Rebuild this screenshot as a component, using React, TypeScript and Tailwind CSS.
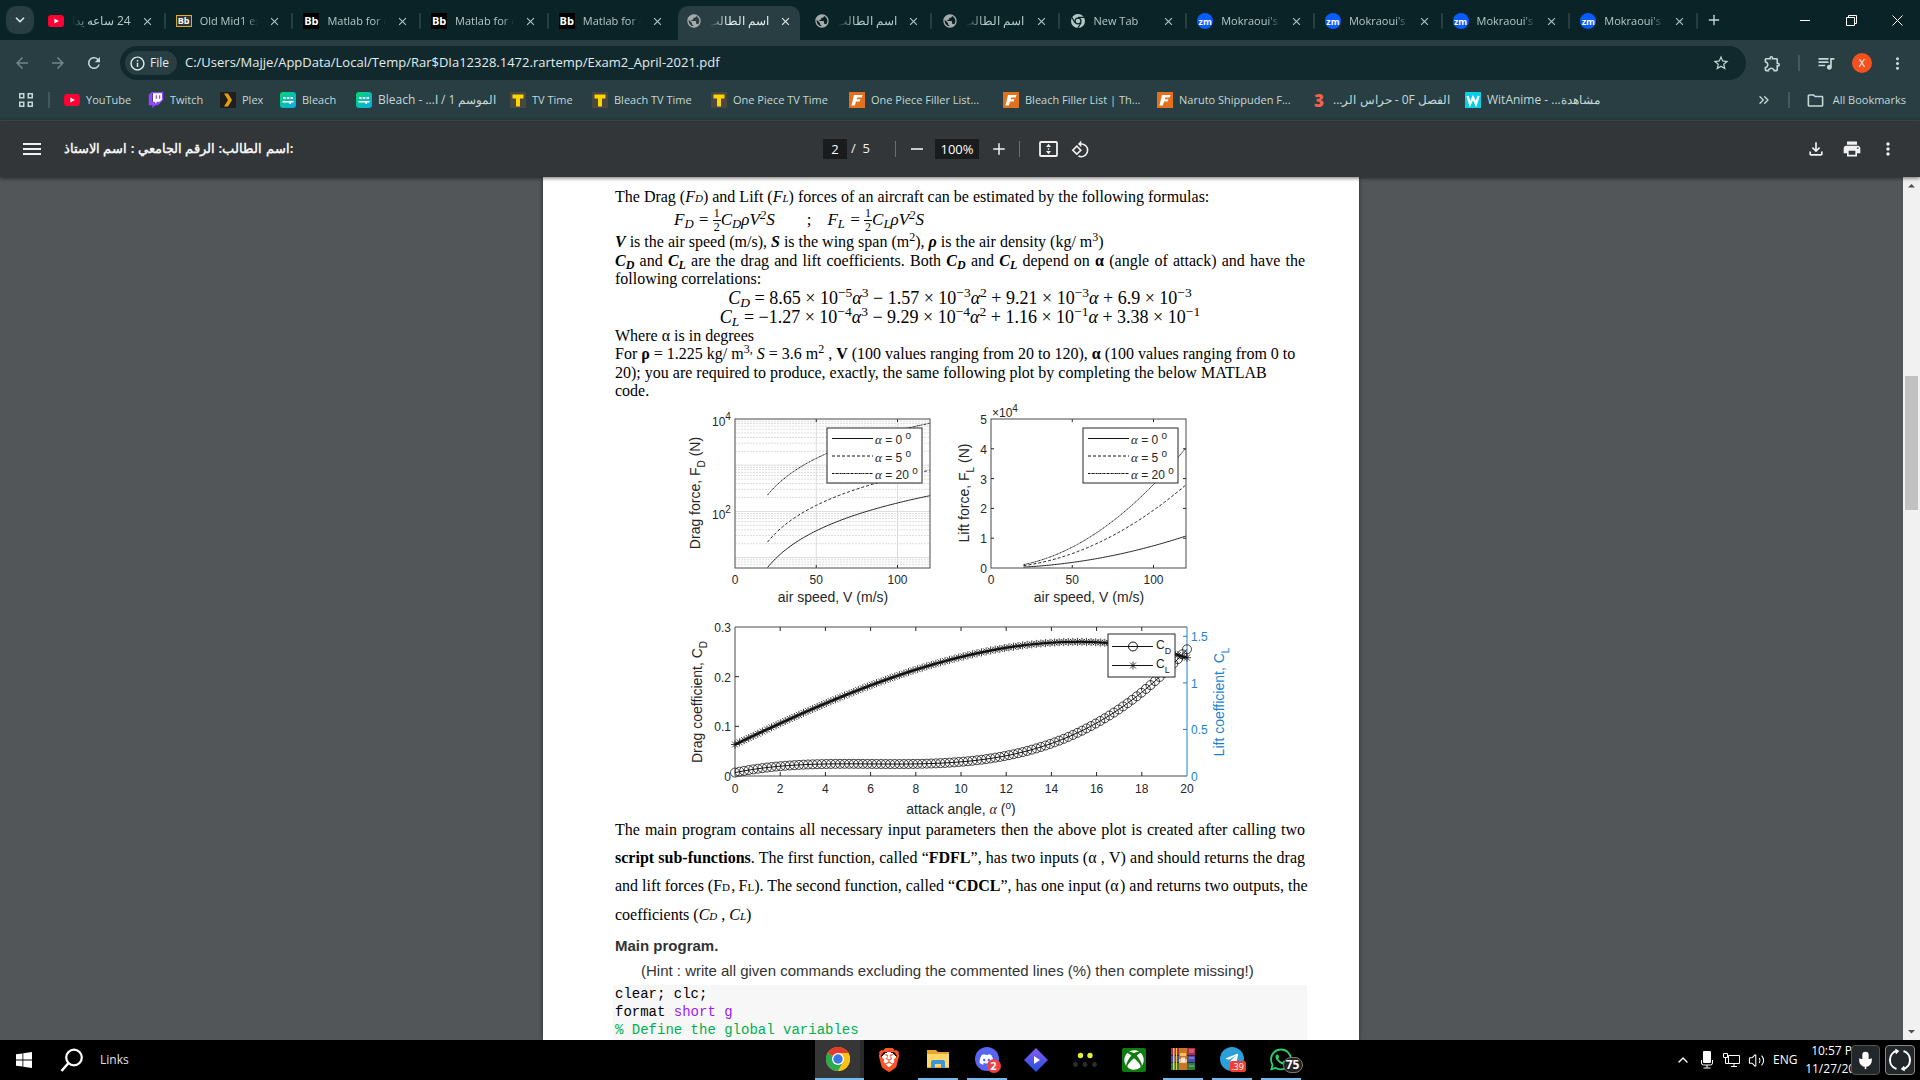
import type { ReactNode } from "react";
import {
  FaDiscord,
  FaTelegramPlane,
  FaTwitch,
  FaWhatsapp,
  FaXbox,
} from "react-icons/fa";
import {
  MdArrowBack,
  MdArrowForward,
  MdClose,
  MdInfoOutline,
  MdMenu,
  MdMoreVert,
  MdOutlineExtension,
  MdOutlineFileDownload,
  MdOutlineFolder,
  MdPrint,
  MdPublic,
  MdQueueMusic,
  MdRefresh,
  MdRotate90DegreesCcw,
  MdStarBorder,
} from "react-icons/md";
import { SiBrave } from "react-icons/si";
import { ChevronDown, ChevronUp, ChevronsRight, Mic, Plus, Volume2 } from "lucide-react";

/* ---------- favicons ---------- */

const YouTubeIcon = () => (
  <svg width="16" height="16" viewBox="0 0 16 16">
    <rect y="2" width="16" height="12" rx="3" fill="#ff0033" />
    <path d="M6.4 5.4 10.8 8l-4.4 2.6z" fill="#fff" />
  </svg>
);

const BbIcon = ({ gold = false }: { gold?: boolean }) => (
  <span
    className={
      gold
        ? "flex h-3 w-4 items-center justify-center border border-[#e0a92c] bg-[#333] text-[9px] font-bold text-white"
        : "flex h-4 w-4 items-center justify-center bg-black text-[11px] font-bold text-white"
    }
  >
    Bb
  </span>
);

const ChromeGray = () => (
  <svg width="16" height="16" viewBox="0 0 16 16">
    <circle cx="8" cy="8" r="7" fill="#b4c8c8" />
    <circle cx="8" cy="8" r="3.6" fill="#0a2326" />
    <circle cx="8" cy="8" r="2.3" fill="#b4c8c8" />
    <path d="M8 4.4h6.4M4.9 9.8 1.8 4.3M11.1 9.8 7.9 15" stroke="#0a2326" strokeWidth="1.2" />
  </svg>
);

const ZmIcon = () => (
  <span className="flex h-4 w-4 items-center justify-center rounded-full bg-[#0b5cff] text-[9px] leading-none font-bold text-white">
    zm
  </span>
);

const TwitchIcon = () => (
  <svg width="16" height="16" viewBox="0 0 16 16">
    <path d="M5 1h9.5v7l-4 4H5z" fill="#fff" />
    <FaTwitch size={16} color="#9146ff" />
  </svg>
);

const PlexIcon = () => (
  <svg width="16" height="16" viewBox="0 0 16 16">
    <rect width="16" height="16" fill="#1f1f1f" />
    <path d="M4 1.500h4L12 8l-4 6.500H4L8 8z" fill="#e5a00d" />
  </svg>
);

const BleachIcon = () => (
  <svg width="16" height="16" viewBox="0 0 16 16">
    <defs>
      <linearGradient id="bleach" x1="0" y1="0" x2="1" y2="1">
        <stop offset="0" stopColor="#06d66f" />
        <stop offset="1" stopColor="#0aa9f0" />
      </linearGradient>
    </defs>
    <rect width="16" height="16" rx="3" fill="url(#bleach)" />
    <path d="M3 5h2.500v2H3zM6.800 5h2.500v2H6.800zM10.500 5H13v2h-2.500zM2.500 9h11v1.500H11V12H9.500v-1.500h-7z" fill="#fff" />
  </svg>
);

const TvIcon = () => (
  <svg width="16" height="16" viewBox="0 0 16 16">
    <rect width="16" height="16" fill="#4a4640" />
    <path d="M2.500 2.500h11v4h-3.500v8H6v-8H2.500z" fill="#ffd500" />
  </svg>
);

const FillerIcon = () => (
  <svg width="16" height="16" viewBox="0 0 16 16">
    <rect width="16" height="16" fill="#e2711d" />
    <path d="M5 3h8.500l-.8 2.600H8.200l-.5 1.600h3.800l-.8 2.400H7L5.800 13.500H2.500z" fill="#fff" />
  </svg>
);

const WitIcon = () => (
  <svg width="16" height="16" viewBox="0 0 16 16">
    <rect width="16" height="16" fill="#08cfe4" />
    <path d="M2.500 4 5 12l3-6.500L11 12l2.500-8" stroke="#fff" strokeWidth="2.400" fill="none" />
  </svg>
);

const ThreeIcon = () => (
  <span className="flex h-4 w-4 items-center justify-center text-[17px] leading-none font-black text-[#f4604a]">3</span>
);

/* ---------- tab strip ---------- */

type TabItem = { icon: ReactNode; title: string; rtl?: boolean; active?: boolean };

const tabs: TabItem[] = [
  { icon: <YouTubeIcon />, title: "24 ساعه يداوم", rtl: true },
  { icon: <BbIcon gold />, title: "Old Mid1 exam" },
  { icon: <BbIcon />, title: "Matlab for engineers" },
  { icon: <BbIcon />, title: "Matlab for engineers" },
  { icon: <BbIcon />, title: "Matlab for engineers" },
  { icon: <MdPublic size={16} color="#a8aaae" />, title: "اسم الطالب: الرقم", rtl: true, active: true },
  { icon: <MdPublic size={16} color="#a8aaae" />, title: "اسم الطالب: الرقم", rtl: true },
  { icon: <MdPublic size={16} color="#a8aaae" />, title: "اسم الطالب: الرقم", rtl: true },
  { icon: <ChromeGray />, title: "New Tab" },
  { icon: <ZmIcon />, title: "Mokraoui's Zoom" },
  { icon: <ZmIcon />, title: "Mokraoui's Zoom" },
  { icon: <ZmIcon />, title: "Mokraoui's Zoom" },
  { icon: <ZmIcon />, title: "Mokraoui's Zoom" },
];

const Tab = ({ tab, line }: { tab: TabItem; line: boolean }) => (
  <div className="flex h-[34px] min-w-0 flex-1 items-center">
    <div
      className={
        tab.active
          ? "flex h-full min-w-0 flex-1 items-center rounded-t-[10px] bg-[#283e42] pr-2 pb-1 pl-2 text-[#e3eded]"
          : "flex h-full min-w-0 flex-1 items-center pr-2 pb-1 pl-2 text-[#b4c8c8]"
      }
    >
      <span className="w-4 shrink-0">{tab.icon}</span>
      <span
        dir={tab.rtl ? "rtl" : "ltr"}
        className={
          tab.rtl
            ? "ml-2 min-w-0 flex-1 overflow-hidden text-[12px] whitespace-nowrap [mask-image:linear-gradient(to_left,black_70%,transparent)]"
            : "ml-2 min-w-0 flex-1 overflow-hidden text-[11px] whitespace-nowrap [mask-image:linear-gradient(to_right,black_80%,transparent)]"
        }
      >
        {tab.title}
      </span>
      <button aria-label="Close tab" className="ml-2.5 shrink-0">
        <MdClose size={13} />
      </button>
    </div>
    <span className={line ? "mx-[2px] mb-1 h-4 w-[2px] rounded bg-[#283e42]" : "w-[6px]"} />
  </div>
);

const TabStrip = () => (
  <div className="flex h-10 shrink-0 items-end bg-[#0a2326]">
    <button
      aria-label="Search tabs"
      className="mr-1.5 mb-1.5 ml-1.5 flex h-7 w-7 items-center justify-center rounded-[10px] bg-[#283e42] text-[#d3e3e3]"
    >
      <ChevronDown size={14} strokeWidth={3} />
    </button>
    <div className="flex max-w-[1660px] min-w-0 flex-1">
      {tabs.map((tab, i) => (
        <Tab key={i} tab={tab} line={!tab.active && i !== 4} />
      ))}
    </div>
    <button aria-label="New tab" className="mb-3 ml-1.5 text-[#c5d8d8]">
      <Plus size={16} />
    </button>
    <div className="ml-auto flex h-10 items-center text-white">
      <button aria-label="Minimize" className="flex w-[46px] justify-center">
        <span className="h-px w-2.5 bg-white" />
      </button>
      <button aria-label="Restore" className="flex w-[46px] justify-center">
        <svg width="11" height="11" viewBox="0 0 11 11" fill="none" stroke="currentColor">
          <path d="M.5 2.500h8v8h-8zM2.500 2.500v-2h8v8h-2" />
        </svg>
      </button>
      <button aria-label="Close" className="flex w-[46px] justify-center">
        <svg width="11" height="11" viewBox="0 0 11 11" stroke="currentColor">
          <path d="M.5.5l10 10M10.500.5l-10 10" />
        </svg>
      </button>
    </div>
  </div>
);

/* ---------- address bar ---------- */

const AddressBar = () => (
  <div className="flex h-[42px] shrink-0 items-center bg-[#283e42] pt-1 text-[#c5d8d8]">
    <div className="flex w-[120px] shrink-0 items-center gap-[18px] pl-[13px]">
      <button aria-label="Back" className="text-[#71878a]">
        <MdArrowBack size={18} />
      </button>
      <button aria-label="Forward" className="text-[#71878a]">
        <MdArrowForward size={18} />
      </button>
      <button aria-label="Reload">
        <MdRefresh size={18} />
      </button>
    </div>
    <div className="flex h-[34px] min-w-0 flex-1 items-center rounded-full bg-[#11292d] pr-4 pl-[5px]">
      <button className="flex h-6 items-center gap-1 rounded-full bg-[#283e42] pr-2 pl-1 text-[12px] font-medium text-[#e3eded]">
        <MdInfoOutline size={17} />
        File
      </button>
      <input
        aria-label="Address"
        className="ml-2 min-w-0 flex-1 bg-transparent text-[13px] text-[#e3eded] outline-none"
        defaultValue="C:/Users/Majje/AppData/Local/Temp/Rar$DIa12328.1472.rartemp/Exam2_April-2021.pdf"
      />
      <button aria-label="Bookmark this page">
        <MdStarBorder size={18} />
      </button>
    </div>
    <div className="flex w-[174px] shrink-0 items-center pl-[17px]">
      <button aria-label="Extensions">
        <MdOutlineExtension size={19} />
      </button>
      <span className="ml-4 h-4 w-[2px] bg-[#46595c]" />
      <button aria-label="Media" className="ml-4">
        <MdQueueMusic size={20} />
      </button>
      <button
        aria-label="Profile"
        className="ml-4 flex h-5 w-5 items-center justify-center rounded-full bg-[#f4511e] text-[11px] text-white"
      >
        X
      </button>
      <button aria-label="Menu" className="ml-4">
        <MdMoreVert size={19} />
      </button>
    </div>
  </div>
);

/* ---------- bookmarks ---------- */

const bookmarks = [
  { icon: <YouTubeIcon />, label: "YouTube", style: "w-[84px]" },
  { icon: <TwitchIcon />, label: "Twitch", style: "w-[72px]" },
  { icon: <PlexIcon />, label: "Plex", style: "w-[60px]" },
  { icon: <BleachIcon />, label: "Bleach", style: "w-[76px]" },
  { icon: <BleachIcon />, label: "Bleach - الموسم 1 / ا...\u200f", style: "w-[154px] text-[12px]" },
  { icon: <TvIcon />, label: "TV Time", style: "w-[82px]" },
  { icon: <TvIcon />, label: "Bleach TV Time", style: "w-[119px]" },
  { icon: <TvIcon />, label: "One Piece TV Time", style: "w-[138px]" },
  { icon: <FillerIcon />, label: "One Piece Filler List...", style: "w-[154px]" },
  { icon: <FillerIcon />, label: "Bleach Filler List | Th...", style: "w-[154px]" },
  { icon: <FillerIcon />, label: "Naruto Shippuden F...", style: "w-[154px]" },
  { icon: <ThreeIcon />, label: "الفصل 0F - حراس الر...", style: "w-[154px] text-[12px]", rtl: true },
  { icon: <WitIcon />, label: "WitAnime - مشاهدة...\u200f", style: "w-[154px] text-[12px]" },
];

const BookmarksBar = () => (
  <nav className="flex h-[39px] shrink-0 items-center border-b border-[#474b4e] bg-[#283e42] pb-0.5 text-[11px] text-[#c5d8d8]">
    <button aria-label="Apps" className="ml-[19px]">
      <svg width="14" height="14" viewBox="0 0 14 14" fill="none" stroke="currentColor" strokeWidth="1.500">
        <path d="M.75.75h4v4h-4zM9.250.75h4v4h-4zM.75 9.250h4v4h-4zM9.250 9.250h4v4h-4z" />
      </svg>
    </button>
    <span className="mr-[14px] ml-[15px] h-4 w-[2px] bg-[#46595c]" />
    <div className="flex min-w-0 flex-1 overflow-hidden">
      {bookmarks.map((b, i) => (
        <a key={i} href="#" className={`flex shrink-0 items-center gap-1.5 whitespace-nowrap ${b.style}`}>
          <span className="w-4 shrink-0">{b.icon}</span>
          <span dir={b.rtl ? "rtl" : "ltr"}>{b.label}</span>
        </a>
      ))}
    </div>
    <button aria-label="More bookmarks" className="mr-4">
      <ChevronsRight size={16} />
    </button>
    <span className="h-4 w-[2px] bg-[#46595c]" />
    <a href="#" className="mr-3.5 ml-4 flex items-center gap-2 whitespace-nowrap">
      <MdOutlineFolder size={19} />
      All Bookmarks
    </a>
  </nav>
);

/* ---------- pdf toolbar ---------- */

const PdfToolbar = () => (
  <div className="z-10 flex h-14 shrink-0 items-center bg-[#323639] text-[#f1f1f1] shadow-[0_1px_4px_rgba(0,0,0,0.6)]">
    <div className="flex flex-1 items-center pl-5">
      <button aria-label="Menu">
        <MdMenu size={24} />
      </button>
      <h1 className="ml-5 text-[13px] font-bold whitespace-nowrap">اسم الطالب: الرقم الجامعي : اسم الاستاذ:</h1>
    </div>
    <div className="flex w-[272px] shrink-0 items-center text-[13px]">
      <input
        aria-label="Page number"
        className="h-5 w-6 bg-[#191b1c] text-center text-white outline-none"
        defaultValue="2"
      />
      <span className="ml-1 w-11 whitespace-pre">/  5</span>
      <span className="h-4 w-px bg-[#6c6f71]" />
      <button aria-label="Zoom out" className="ml-[11px] flex w-5 justify-center">
        <span className="h-[2px] w-3 bg-[#c9cacb]" />
      </button>
      <input
        aria-label="Zoom level"
        className="ml-2 h-5 w-11 bg-[#191b1c] text-center text-white outline-none"
        defaultValue="100%"
      />
      <button aria-label="Zoom in" className="ml-[11px]">
        <Plus size={18} />
      </button>
      <span className="ml-[11px] h-4 w-px bg-[#6c6f71]" />
      <button aria-label="Fit to page" className="ml-[19px]">
        <svg width="19" height="16" viewBox="0 0 19 16">
          <rect x="1" y="1" width="17" height="14" rx="1" fill="none" stroke="currentColor" strokeWidth="1.800" />
          <path d="M9.500 2.800 12 6H7zM9.500 13.200 12 10H7zM8.800 7.300h1.400v1.400H8.800z" fill="currentColor" />
        </svg>
      </button>
      <button aria-label="Rotate" className="ml-[13px]">
        <MdRotate90DegreesCcw size={19} />
      </button>
    </div>
    <div className="flex flex-1 items-center justify-end gap-4 pr-[22px]">
      <button aria-label="Download">
        <MdOutlineFileDownload size={20} />
      </button>
      <button aria-label="Print">
        <MdPrint size={20} />
      </button>
      <button aria-label="More actions">
        <MdMoreVert size={20} />
      </button>
    </div>
  </div>
);

/* ---------- plots ---------- */

const cd = (a: number) => 8.65e-5 * a ** 3 - 1.57e-3 * a ** 2 + 9.21e-3 * a + 6.9e-3;
const cl = (a: number) => -1.27e-4 * a ** 3 - 9.29e-4 * a ** 2 + 1.16e-1 * a + 3.38e-1;
const linspace = (from: number, to: number) =>
  Array.from({ length: 100 }, (_, i) => from + ((to - from) * i) / 99);

const speeds = linspace(20, 120);
const angles = linspace(0, 20);
const force = (c: number, v: number) => 0.5 * 1.225 * 3.6 * v * v * c;

const dashes = [
  { alpha: 0, dash: undefined },
  { alpha: 5, dash: "3 2" },
  { alpha: 20, dash: "2 .5 .8 .5" },
];

const path = (points: number[][]) => "M" + points.map((p) => p.join(" ")).join("L");

const TOP = 418;
const BOTTOM = 567;
const speedX = (left: number, v: number) => left + (v * 195) / 120;
const dragY = (f: number) => TOP + (4 - Math.log10(f)) * 46.2;
const liftY = (f: number) => BOTTOM - (f / 50000) * (BOTTOM - TOP);

const minorGrid: number[] = [];
for (let d = 0; d < 4; d++) {
  for (let k = 2; k < 10; k++) {
    const f = k * 10 ** d;
    if (f > 6.1) minorGrid.push(f);
  }
}

const Legend = ({ left }: { left: number }) => (
  <g>
    <rect x={left} y={427} width="95" height="55" fill="#fff" stroke="#262626" />
    {dashes.map((d, i) => (
      <g key={d.alpha}>
        <path d={`M${left + 5} ${437.5 + i * 17.5}h41`} stroke="#111" strokeDasharray={d.dash} />
        <text x={left + 48} y={443 + i * 17.5} fontSize="12">
          <tspan fontFamily="Liberation Serif" fontStyle="italic" fontSize="13">α</tspan>
          {` = ${d.alpha} `}
          <tspan dy="-5" fontSize="10">o</tspan>
        </text>
      </g>
    ))}
  </g>
);

const SpeedAxis = ({ left }: { left: number }) => (
  <g>
    <path
      d={[50, 100].map((v) => `M${speedX(left, v)} ${BOTTOM}v-3M${speedX(left, v)} ${TOP}v3`).join("")}
      stroke="#262626"
    />
    <rect x={left} y={TOP} width="195" height={BOTTOM - TOP} fill="none" stroke="#4a4a4a" />
    {[0, 50, 100].map((v) => (
      <text key={v} x={speedX(left, v)} y="583" textAnchor="middle">
        {v}
      </text>
    ))}
    <text x={left + 98} y="601" textAnchor="middle" fontSize="14">
      air speed, V (m/s)
    </text>
  </g>
);

const ForcePlot = ({
  left,
  coef,
  toY,
}: {
  left: number;
  coef: (a: number) => number;
  toY: (f: number) => number;
}) => (
  <g>
    {dashes.map((d) => (
      <path
        key={d.alpha}
        d={path(speeds.map((v) => [speedX(left, v), toY(force(coef(d.alpha), v))]))}
        fill="none"
        stroke="#222"
        strokeDasharray={d.dash}
      />
    ))}
    <SpeedAxis left={left} />
    <Legend left={left + 92} />
  </g>
);

const angleX = (a: number) => 735 + (a * 452) / 20;
const cdY = (c: number) => 775 - (c * 149) / 0.3;
const clY = (c: number) => 775 - (c * 149) / 1.6;

const Star = ({ x, y }: { x: number; y: number }) => (
  <path d={`M${x - 4} ${y}h8M${x} ${y - 4}v8M${x - 3} ${y - 3}l6 6M${x - 3} ${y + 3}l6 -6`} stroke="#111" strokeWidth=".8" />
);

const Plots = () => (
  <svg
    className="ml-[65px] block"
    width="560"
    height="415"
    viewBox="680 400 560 415"
    fontFamily="Liberation Sans, sans-serif"
    fontSize="12"
    fill="#262626"
  >
    {/* drag force, log scale */}
    <path
      d={minorGrid.map((f) => `M735 ${dragY(f)}h195`).join("")}
      stroke="#d4d4d4"
      strokeDasharray="2 1"
      strokeWidth=".8"
    />
    <path
      d={[10, 100, 1000].map((f) => `M735 ${dragY(f)}h195`).join("") + `M${speedX(735, 50)} 418v149M${speedX(735, 100)} 418v149`}
      stroke="#dcdcdc"
    />
    <ForcePlot left={735} coef={cd} toY={dragY} />
    <text x="712" y="425">
      10<tspan dy="-6" fontSize="10">4</tspan>
    </text>
    <text x="712" y="518">
      10<tspan dy="-6" fontSize="10">2</tspan>
    </text>
    <text transform="translate(700 492) rotate(-90)" textAnchor="middle" fontSize="14">
      Drag force, F<tspan dy="5" fontSize="10">D</tspan>
      <tspan dy="-5"> (N)</tspan>
    </text>

    {/* lift force */}
    <ForcePlot left={991} coef={cl} toY={liftY} />
    <path
      d={[1, 2, 3, 4].map((n) => `M991 ${liftY(n * 10000)}h3M1186 ${liftY(n * 10000)}h-3`).join("")}
      stroke="#262626"
    />
    {[0, 1, 2, 3, 4, 5].map((n) => (
      <text key={n} x="987" y={liftY(n * 10000) + 5} textAnchor="end">
        {n}
      </text>
    ))}
    <text x="992" y="416">
      ×10<tspan dy="-5" fontSize="10">4</tspan>
    </text>
    <text transform="translate(969 492) rotate(-90)" textAnchor="middle" fontSize="14">
      Lift force, F<tspan dy="5" fontSize="10">L</tspan>
      <tspan dy="-5"> (N)</tspan>
    </text>

    {/* coefficients against attack angle */}
    <path d="M1187 626H735V775H1187" fill="none" stroke="#4a4a4a" />
    <path
      d={[2, 4, 6, 8, 10, 12, 14, 16, 18].map((a) => `M${angleX(a)} 775v-4M${angleX(a)} 626v4`).join("") + `M735 ${cdY(0.1)}h4M735 ${cdY(0.2)}h4`}
      stroke="#262626"
    />
    <path
      d={`M1187 626V775M1187 ${clY(0.5)}h-4M1187 ${clY(1)}h-4M1187 ${clY(1.5)}h-4`}
      stroke="#1c84cc"
    />
    {[0, 2, 4, 6, 8, 10, 12, 14, 16, 18, 20].map((a) => (
      <text key={a} x={angleX(a)} y="792" textAnchor="middle">
        {a}
      </text>
    ))}
    {[0, 0.1, 0.2, 0.3].map((c) => (
      <text key={c} x="731" y={cdY(c) + 5} textAnchor="end">
        {c}
      </text>
    ))}
    {[0, 0.5, 1, 1.5].map((c) => (
      <text key={c} x="1191" y={clY(c) + 5} fill="#1c84cc">
        {c}
      </text>
    ))}
    <path d={path(angles.map((a) => [angleX(a), cdY(cd(a))]))} fill="none" stroke="#111" />
    <path d={path(angles.map((a) => [angleX(a), clY(cl(a))]))} fill="none" stroke="#111" strokeWidth="2" />
    {angles.map((a) => (
      <g key={a}>
        <circle cx={angleX(a)} cy={cdY(cd(a))} r="4.500" fill="none" stroke="#111" strokeWidth=".8" />
        <Star x={angleX(a)} y={clY(cl(a))} />
      </g>
    ))}
    <rect x="1108" y="633" width="67" height="43" fill="#fff" stroke="#262626" />
    <path d="M1112 645.500h41M1112 664.500h41" stroke="#111" />
    <circle cx="1133" cy="645.500" r="4.500" fill="none" stroke="#111" />
    <Star x={1133} y={664.5} />
    <text x="1156" y="648">
      C<tspan dy="5" fontSize="9">D</tspan>
    </text>
    <text x="1156" y="667">
      C<tspan dy="5" fontSize="9">L</tspan>
    </text>
    <text transform="translate(702 701) rotate(-90)" textAnchor="middle" fontSize="14">
      Drag coefficient, C<tspan dy="5" fontSize="10">D</tspan>
    </text>
    <text transform="translate(1224 701) rotate(-90)" textAnchor="middle" fontSize="14" fill="#1c84cc">
      Lift coefficient, C<tspan dy="5" fontSize="10">L</tspan>
    </text>
    <text x="961" y="813" textAnchor="middle" fontSize="14" className="overflow-visible">
      attack angle, <tspan fontFamily="Liberation Serif" fontStyle="italic">α</tspan> (
      <tspan dy="-5" fontSize="10">o</tspan>
      <tspan dy="5">)</tspan>
    </text>
  </svg>
);

/* ---------- document ---------- */

const Half = () => (
  <span className="inline-flex flex-col items-center text-[12px] leading-[11px] not-italic">
    <span className="border-b border-black px-px pb-px">1</span>
    <span className="pt-px">2</span>
  </span>
);

const Small = ({ children }: { children: string }) => <span className="text-[11px]">{children}</span>;

const Pow = ({ c, e }: { c: string; e: string }) => (
  <>
    {c} × 10<sup>−{e}</sup>
  </>
);

const Alpha = ({ e }: { e?: string }) => (
  <>
    <i>α</i>
    {e && <sup>{e}</sup>}
  </>
);

const PdfPage = () => (
  <article className="w-[816px] shrink-0 bg-white pt-[11px] pr-[54px] pl-[72px] font-['Liberation_Serif',serif] text-[16px] leading-[18px] text-black shadow-[0_0_4px_rgba(0,0,0,0.5)]">
    <p>
      The Drag (<i>F<Small>D</Small></i>) and Lift (<i>F<Small>L</Small></i>) forces of an aircraft can be estimated by
      the following formulas:
    </p>
    <div className="flex h-[26px] items-center pl-[59px] text-[17px] italic">
      <span>F<sub>D</sub> =&thinsp;</span>
      <Half />
      <span>C<sub>D</sub>ρV<sup>2</sup>S</span>
      <span className="mr-4 ml-8 not-italic">;</span>
      <span>F<sub>L</sub> =&thinsp;</span>
      <Half />
      <span>C<sub>L</sub>ρV<sup>2</sup>S</span>
    </div>
    <p className="mb-px">
      <b><i>V</i></b> is the air speed (m/s), <b><i>S</i></b> is the wing span (m<sup>2</sup>), <b><i>ρ</i></b> is the air
      density (kg/ m<sup>3</sup>)
    </p>
    <p className="[text-align-last:justify]">
      <b><i>C<sub>D</sub></i></b> and <b><i>C<sub>L</sub></i></b> are the drag and lift coefficients. Both{" "}
      <b><i>C<sub>D</sub></i></b> and <b><i>C<sub>L</sub></i></b> depend on <b>α</b> (angle of attack) and have the
    </p>
    <p>following correlations:</p>
    <div className="pt-px text-center text-[18px] leading-[19px]">
      <p>
        <i>C<sub>D</sub></i> = <Pow c="8.65" e="5" /><Alpha e="3" /> − <Pow c="1.57" e="3" /><Alpha e="2" /> +{" "}
        <Pow c="9.21" e="3" /><Alpha /> + <Pow c="6.9" e="3" />
      </p>
      <p>
        <i>C<sub>L</sub></i> = −<Pow c="1.27" e="4" /><Alpha e="3" /> − <Pow c="9.29" e="4" /><Alpha e="2" /> +{" "}
        <Pow c="1.16" e="1" /><Alpha /> + <Pow c="3.38" e="1" />
      </p>
    </div>
    <p>Where α is in degrees</p>
    <p>
      For <b>ρ</b> = 1.225 kg/ m<sup>3,</sup> <i>S</i> = 3.6 m<sup>2</sup> , <b>V</b> (100 values ranging from 20 to 120),{" "}
      <b>α</b> (100 values ranging from 0 to
    </p>
    <p className="leading-[19px]">
      20); you are required to produce, exactly, the same following plot by completing the below MATLAB
    </p>
    <p className="mb-px">code.</p>
    <Plots />
    <div className="leading-7 whitespace-nowrap">
      <p className="[text-align-last:justify]">
        The main program contains all necessary input parameters then the above plot is created after calling two
      </p>
      <p className="[text-align-last:justify]">
        <b>script sub-functions</b>. The first function, called “<b>FDFL</b>”, has two inputs (α , V) and should returns
        the drag
      </p>
      <p className="[text-align-last:justify]">
        and lift forces (F<Small>D</Small>&#8202;,&thinsp;F<Small>L</Small>). The second function, called “<b>CDCL</b>”,
        has one input (α&#8202;) and returns two outputs, the
      </p>
      <p>
        coefficients (<i>C<Small>D</Small></i> , <i>C<Small>L</Small></i>)
      </p>
    </div>
    <h2 className="mt-[7px] font-['Liberation_Sans',sans-serif] text-[15px] font-bold text-[#333]">Main program.</h2>
    <p className="mt-[7px] pl-[26px] font-['Liberation_Sans',sans-serif] text-[15px] whitespace-nowrap text-[#333]">
      (Hint : write all given commands excluding the commented lines (%) then complete missing!)
    </p>
    <pre className="-mx-0.5 mt-[5px] bg-[#f7f7f7] px-0.5 pb-10 font-['Liberation_Mono',monospace] text-[14px] leading-[18px]">
      {"clear; clc;\nformat "}
      <span className="text-[#a020f0]">short g</span>
      {"\n"}
      <span className="text-[#00b050]">% Define the global variables</span>
    </pre>
  </article>
);

const Scrollbar = () => (
  <div className="flex w-[17px] shrink-0 flex-col items-center bg-[#f1f1f1]">
    <svg width="17" height="17" viewBox="0 0 17 17" fill="#505050">
      <path d="M5 10.500 8.500 7l3.500 3.500z" />
    </svg>
    <div className="mt-[182px] h-[134px] w-[13px] bg-[#c1c1c1]" />
    <svg className="mt-auto" width="17" height="17" viewBox="0 0 17 17" fill="#505050">
      <path d="M5 7l3.500 3.500L12 7z" />
    </svg>
  </div>
);

/* ---------- taskbar ---------- */

const ChromeIcon = () => (
  <svg width="24" height="24" viewBox="0 0 24 24">
    <circle cx="12" cy="12" r="12" fill="#fbc116" />
    <path d="M12 12 1.600 6A12 12 0 0 1 22.400 6z" fill="#e33b2e" />
    <path d="M12 12 1.600 6A12 12 0 0 0 12 24l5.200-9z" fill="#2da94f" />
    <path d="M12 6h10.400A12 12 0 0 1 12 24l5.200-9z" fill="#fbc116" />
    <circle cx="12" cy="12" r="6" fill="#fff" />
    <circle cx="12" cy="12" r="4.700" fill="#3b78e7" />
  </svg>
);

const BraveIcon = () => (
  <span className="flex h-6 w-6 items-center justify-center">
    <SiBrave size={24} color="#fb542b" className="[background:radial-gradient(#fff_45%,transparent_46%)]" />
  </span>
);

const FolderIcon = () => (
  <svg width="24" height="24" viewBox="0 0 24 24">
    <path d="M1 3h9l2 2h11v16H1z" fill="#e9a52b" />
    <path d="M1 7h22v13H1z" fill="#ffd869" />
    <path d="M5 21v-6a2 2 0 0 1 2-2h10a2 2 0 0 1 2 2v6h-4v-4H9v4z" fill="#3f96d6" />
  </svg>
);

const DiscordIcon = () => (
  <span className="relative flex h-6 w-6 items-center justify-center rounded-full bg-[#5865f2] text-white">
    <FaDiscord size={15} />
    <span className="absolute top-3 left-3 flex h-3.5 w-3.5 items-center justify-center rounded-full bg-[#ed4245] text-[11px] font-bold">
      2
    </span>
  </span>
);

const PlayIcon = () => (
  <svg width="24" height="24" viewBox="0 0 24 24">
    <defs>
      <linearGradient id="diamond" x1="0" y1="0" x2="0" y2="1">
        <stop offset="0" stopColor="#8a5cf0" />
        <stop offset="1" stopColor="#1d4fe0" />
      </linearGradient>
    </defs>
    <path d="M12 0l12 12-12 12L0 12z" fill="url(#diamond)" />
    <path d="M10 8l6 4-6 4z" fill="#fff" />
  </svg>
);

const DotsIcon = () => (
  <svg width="24" height="24" viewBox="0 0 24 24">
    <circle cx="7.500" cy="7.500" r="2.700" fill="#e0ee3c" />
    <circle cx="17" cy="7.500" r="2.700" fill="#e0ee3c" />
    <circle cx="2.500" cy="16.500" r="2.400" fill="#2d2d2d" />
    <circle cx="12" cy="16.500" r="2.400" fill="#2d2d2d" />
    <circle cx="21.500" cy="16.500" r="2.400" fill="#2d2d2d" />
  </svg>
);

const XboxIcon = () => (
  <span className="flex h-6 w-6 items-center justify-center rounded-xs bg-[#107c10] text-white">
    <FaXbox size={20} />
  </span>
);

const RarIcon = () => (
  <svg width="24" height="24" viewBox="0 0 24 24">
    <path d="M0 1h24v7H0z" fill="#b52a4a" />
    <path d="M0 8.500h24v7H0z" fill="#4a4fb0" />
    <path d="M0 16h24v7H0z" fill="#2f7d3a" />
    <path d="M2 1h1.500v22H2zM5 1h1v22H5z" fill="#e8c84a" />
    <path d="M8 1h8v22H8z" fill="#c9762b" />
    <path d="M9 6h6v3H9zM8 12h8v4H8z" fill="#f0c35a" />
    <path d="M10 10.500h4v5h-4z" fill="#e8e8e8" />
    <path d="M18 3h5M18 5h5M18 11h5M18 19h5" stroke="#e6e6e6" strokeWidth=".6" />
  </svg>
);

const TelegramIcon = () => (
  <span className="relative flex h-6 w-6 items-center justify-center rounded-full bg-[#2a9fd8] text-white">
    <FaTelegramPlane size={14} />
    <span className="absolute top-3.5 left-2.5 flex h-[11px] w-4 items-center justify-center rounded-xs bg-[#f23c34] text-[9px]">
      .39
    </span>
  </span>
);

const WhatsappIcon = () => (
  <span className="relative flex h-6 w-6 text-[#25d366]">
    <FaWhatsapp size={25} />
    <span className="absolute top-2.5 left-3.5 flex h-4 w-5 items-center justify-center rounded-full border border-[#777] bg-[#222] text-[12px] font-bold text-white">
      75
    </span>
  </span>
);

const apps = [
  { name: "Chrome", icon: <ChromeIcon />, open: true, active: true },
  { name: "Brave", icon: <BraveIcon /> },
  { name: "Explorer", icon: <FolderIcon />, open: true },
  { name: "Discord", icon: <DiscordIcon />, open: true },
  { name: "Player", icon: <PlayIcon /> },
  { name: "Dots", icon: <DotsIcon /> },
  { name: "Xbox", icon: <XboxIcon /> },
  { name: "WinRAR", icon: <RarIcon />, open: true },
  { name: "Telegram", icon: <TelegramIcon />, open: true },
  { name: "WhatsApp", icon: <WhatsappIcon />, open: true },
];

const Taskbar = () => (
  <footer className="flex h-10 shrink-0 items-stretch bg-black text-white">
    <div className="flex flex-1 items-center pl-4">
      <button aria-label="Start">
        <svg width="16" height="16" viewBox="0 0 16 16" fill="#fff">
          <path d="M0 2.300 6.500 1.400v6.200H0zM7.300 1.300 16 0v7.600H7.300zM0 8.400h6.500v6.200L0 13.700zM7.300 8.400H16V16l-8.700-1.300z" />
        </svg>
      </button>
      <button aria-label="Search" className="ml-7">
        <svg width="24" height="24" viewBox="0 0 24 24" fill="none" stroke="#fff" strokeWidth="2.200">
          <circle cx="14" cy="9.500" r="7.800" />
          <path d="M8.500 15 1.500 23" strokeWidth="2.600" />
        </svg>
      </button>
      <span className="ml-4 text-[12px] text-[#e0e0e0]">Links</span>
    </div>
    <div className="flex shrink-0">
      {apps.map((app) => (
        <button
          key={app.name}
          aria-label={app.name}
          className={
            app.active
              ? "flex w-[49px] flex-col items-center border-r-4 border-[#2a2a2a] bg-[#363636]"
              : "flex w-[49px] flex-col items-center"
          }
        >
          <span className="flex flex-1 items-center">{app.icon}</span>
          {app.open && (
            <span className={app.active ? "-mr-1 h-0.5 w-[49px] bg-[#76b9ed]" : "h-0.5 w-10 bg-[#76b9ed]"} />
          )}
        </button>
      ))}
    </div>
    <div className="flex w-[615px] shrink-0 items-center justify-end overflow-hidden pr-[5px]">
      <ChevronUp size={16} />
      <svg className="ml-2" width="16" height="18" viewBox="0 0 16 18" fill="#fff">
        <rect x="4" y="0" width="8" height="12" rx="1" />
        <path d="M2.500 9v3q0 2 2 2h7q2 0 2-2V9M8 14v3M4.500 17h7" fill="none" stroke="#fff" />
      </svg>
      <svg className="ml-2" width="17" height="15" viewBox="0 0 17 15" fill="none" stroke="#fff">
        <path d="M5.500 2.500h11v8h-11zM11 10.500v3M8 13.500h6M.5.500h4v4h-4zM2.500 4.500v6h3" />
      </svg>
      <Volume2 className="ml-2" size={17} strokeWidth={1.5} />
      <span className="ml-2 w-[30px] text-[12px]">ENG</span>
      <div className="relative flex h-10 w-[112px] items-center">
        <div className="w-[68px] text-center text-[12px] leading-[18px] whitespace-nowrap">
          <p>10:57 PM</p>
          <p>11/27/2024</p>
        </div>
        <button
          aria-label="Voice input"
          className="absolute top-[5px] left-12 flex h-[30px] w-[29px] items-center justify-center rounded-sm border border-[#55534a] bg-[#22272b]"
        >
          <Mic size={19} fill="#fff" />
        </button>
        <button
          aria-label="Sync"
          className="absolute top-[5px] left-[82px] flex h-[30px] w-[30px] items-center justify-center rounded-sm border border-[#8a887c] bg-[#22272b]"
        >
          <svg width="24" height="24" viewBox="0 0 24 24" fill="none" stroke="#fff" strokeWidth="2">
            <path d="M9 2.800A9.500 9.500 0 0 0 8.500 21M15 21.200A9.500 9.500 0 0 0 15.500 3" />
            <path d="M7.500 1l3.500 2-3 3zM16.500 23 13 21l3-3z" fill="#fff" strokeWidth=".5" />
          </svg>
        </button>
      </div>
    </div>
  </footer>
);

export default function App() {
  return (
    <div className="flex h-screen flex-col overflow-hidden bg-[#525659] font-['Open_Sans','Noto_Sans',sans-serif] text-[12px]">
      <TabStrip />
      <AddressBar />
      <BookmarksBar />
      <PdfToolbar />
      <main className="flex min-h-0 flex-1">
        <div className="flex min-w-0 flex-1 justify-center overflow-hidden pr-px">
          <PdfPage />
        </div>
        <Scrollbar />
      </main>
      <Taskbar />
    </div>
  );
}
